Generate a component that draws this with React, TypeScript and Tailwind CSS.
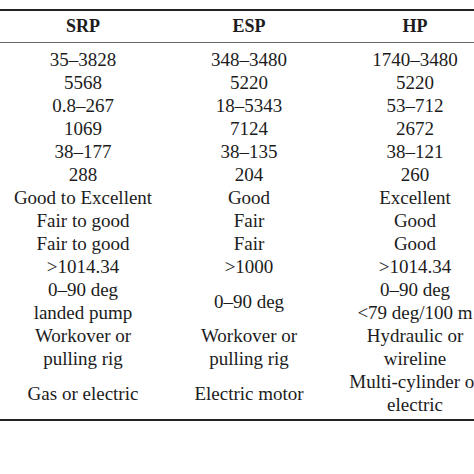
const rows: string[][][] = [
  [['35–3828'], ['348–3480'], ['1740–3480']],
  [['5568'], ['5220'], ['5220']],
  [['0.8–267'], ['18–5343'], ['53–712']],
  [['1069'], ['7124'], ['2672']],
  [['38–177'], ['38–135'], ['38–121']],
  [['288'], ['204'], ['260']],
  [['Good to Excellent'], ['Good'], ['Excellent']],
  [['Fair to good'], ['Fair'], ['Good']],
  [['Fair to good'], ['Fair'], ['Good']],
  [['>1014.34'], ['>1000'], ['>1014.34']],
  [['0–90 deg', 'landed pump'], ['0–90 deg'], ['0–90 deg', '<79 deg/100 m']],
  [['Workover or', 'pulling rig'], ['Workover or', 'pulling rig'], ['Hydraulic or', 'wireline']],
  [['Gas or electric'], ['Electric motor'], ['Multi-cylinder or', 'electric']],
]

export default function App() {
  return (
    <div
      className="w-[474px] h-[474px] overflow-hidden bg-white pt-[9px] text-[#1c1c1c]"
      style={{ fontFamily: '"Liberation Serif", "Times New Roman", serif' }}
    >
      <div className="w-[498px] border-t-2 border-b-2 border-[#222]">
        <div className="grid grid-cols-3 border-b border-[#6a6a6a] h-[32px] items-center text-[18px] font-bold">
          <div className="text-center leading-[31px]">SRP</div>
          <div className="text-center leading-[31px]">ESP</div>
          <div className="text-center leading-[31px]">HP</div>
        </div>
        <div className="pt-[5px] pb-[3px] text-[19px] leading-[23px]">
          {rows.map((row, i) => (
            <div key={i} className="grid grid-cols-3">
              {row.map((cell, j) => (
                <div key={j} className="flex flex-col items-center justify-center text-center whitespace-nowrap">
                  {cell.map((line, k) => (
                    <span key={k}>{line}</span>
                  ))}
                </div>
              ))}
            </div>
          ))}
        </div>
      </div>
    </div>
  )
}
